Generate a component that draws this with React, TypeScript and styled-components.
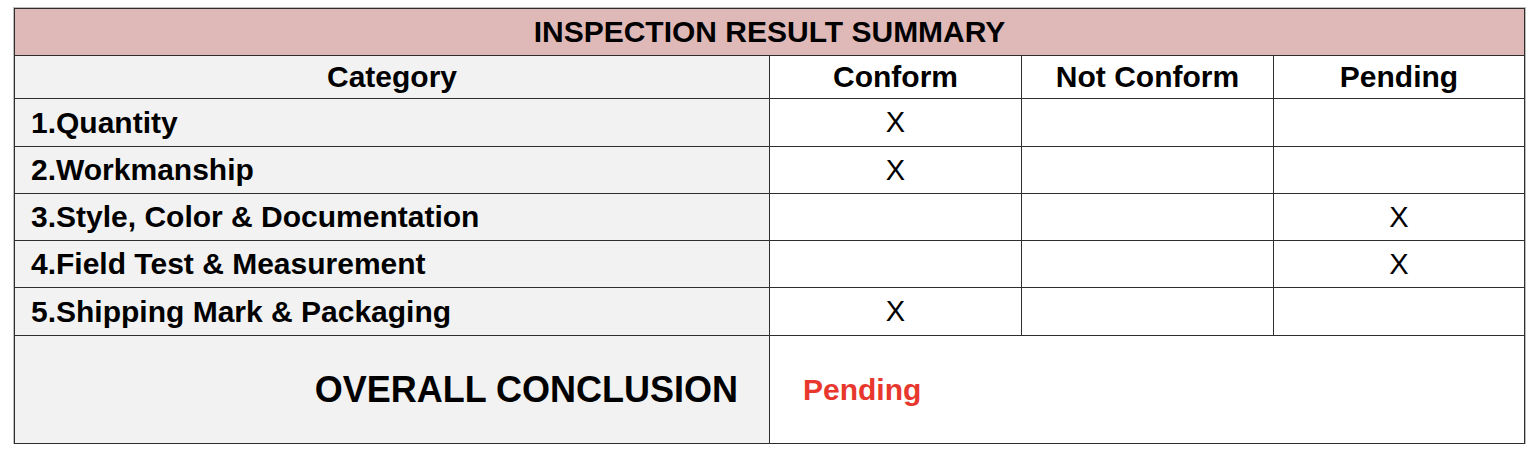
import React, { FC } from 'react';
import styled, { createGlobalStyle } from 'styled-components';

interface RowData {
    label: string;
    result: 'conform' | 'notConform' | 'pending';
}

const ROWS: Array<RowData> = [
    { label: '1.Quantity', result: 'conform' },
    { label: '2.Workmanship', result: 'conform' },
    { label: '3.Style, Color & Documentation', result: 'pending' },
    { label: '4.Field Test & Measurement', result: 'pending' },
    { label: '5.Shipping Mark & Packaging', result: 'conform' },
];

const COLUMNS: Array<{ key: RowData['result']; title: string }> = [
    { key: 'conform', title: 'Conform' },
    { key: 'notConform', title: 'Not Conform' },
    { key: 'pending', title: 'Pending' },
];

let App: FC = () => {
    return (
        <Page>
            <GlobalStyle />
            <Sheet>
                <TitleCell>INSPECTION RESULT SUMMARY</TitleCell>
                <HeadCell $shade>Category</HeadCell>
                {COLUMNS.map((col) => (
                    <HeadCell key={col.key}>{col.title}</HeadCell>
                ))}
                {ROWS.map((row) => (
                    <React.Fragment key={row.label}>
                        <LabelCell>{row.label}</LabelCell>
                        {COLUMNS.map((col) => (
                            <MarkCell key={row.label + '_' + col.key}>
                                {row.result === col.key ? 'X' : ''}
                            </MarkCell>
                        ))}
                    </React.Fragment>
                ))}
                <ConclusionLabel>OVERALL CONCLUSION</ConclusionLabel>
                <ConclusionValue>Pending</ConclusionValue>
            </Sheet>
        </Page>
    );
};

let GlobalStyle = createGlobalStyle`
    body {
        margin: 0;
        background: #fff;
        font-family: "Liberation Sans", Arial, sans-serif;
    }
`;

let Page = styled.div`
    padding: 8px 0 0 14px;
`;

let Sheet = styled.div`
    display: grid;
    width: 1511px;
    box-sizing: border-box;
    grid-template-columns: 754px 251px 251px 250px;
    grid-template-rows: 46px 42px 47px 46px 46px 46px 47px 107px;
    gap: 1px;
    padding: 1px;
    background: #2e2e2e;
    box-shadow: 0 0 0 1px #bdbdbd;
    color: #000;
`;

let Cell = styled.div`
    display: flex;
    align-items: center;
    background: #fff;
    font-size: 30px;
    white-space: nowrap;
`;

let TitleCell = styled(Cell)`
    grid-column: 1 / span 4;
    justify-content: center;
    background: #dfb9b8;
    font-weight: 700;
`;

let HeadCell = styled(Cell)<{ $shade?: boolean }>`
    justify-content: center;
    font-weight: 700;
    background: ${(p) => (p.$shade ? '#f2f2f2' : '#fff')};
`;

let LabelCell = styled(Cell)`
    padding-left: 16px;
    background: #f2f2f2;
    font-weight: 700;
`;

let MarkCell = styled(Cell)`
    justify-content: center;
    font-size: 29px;
    font-weight: 400;
`;

let ConclusionLabel = styled(Cell)`
    justify-content: flex-end;
    padding-right: 31px;
    background: #f2f2f2;
    font-size: 36px;
    font-weight: 700;
`;

let ConclusionValue = styled(Cell)`
    grid-column: 2 / span 3;
    padding-left: 33px;
    color: #e8372d;
    font-weight: 700;
`;

export default App;
